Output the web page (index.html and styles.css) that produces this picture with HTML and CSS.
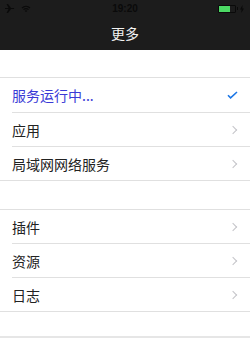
FILE: index.html
```html
<!DOCTYPE html>
<html>
<head>
<meta charset="utf-8">
<link rel="stylesheet" href="styles.css">
</head>
<body>
<div class="top">
  <div class="status">
    <div class="status-left">
      <svg width="10" height="9" viewBox="0 0 10 9"><path d="M0 4h3.5L1.5 0h1.5l3 4h3a1 1 0 0 1 0 1h-3l-3 4H1.5l2-4H0z" fill="#0a0a0a"/></svg>
      <svg width="10" height="8" viewBox="0 0 10 8"><path d="M1 3a6 6 0 0 1 8 0M2.5 4.6a4 4 0 0 1 5 0M4 6.2a2 2 0 0 1 2 0" stroke="#0a0a0a" stroke-width="1.2" fill="none"/></svg>
    </div>
    <div class="time">19:20</div>
    <div class="status-right">
      <div class="battery"><div class="battery-fill"></div></div>
      <div class="battery-tip"></div>
      <svg width="4" height="8" viewBox="0 0 4 8"><path d="M2.5 0L0 4.5h1.6L1.2 8 4 3.4H2.4z" fill="#0a0a0a"/></svg>
    </div>
  </div>
  <div class="nav">更多</div>
</div>
<div class="content">
  <div class="group group-first">
    <div class="row row-tall"><span class="label label-active">服务运行中...</span>
      <svg class="check" width="11" height="8" viewBox="0 0 11 8"><path d="M1 4.2l2.6 2.6L10 1" stroke="#1b76e6" stroke-width="1.6" fill="none"/></svg></div>
    <div class="row"><span class="label">应用</span><span class="chev"></span></div>
    <div class="row row-last"><span class="label">局域网网络服务</span><span class="chev"></span></div>
  </div>
  <div class="group group-second">
    <div class="row"><span class="label">插件</span><span class="chev"></span></div>
    <div class="row"><span class="label">资源</span><span class="chev"></span></div>
    <div class="row row-last"><span class="label">日志</span><span class="chev"></span></div>
  </div>
  <div class="group group-third"></div>
</div>
</body>
</html>
```
FILE: styles.css
```css
html, body {
  margin: 0;
  padding: 0;
  background: #ffffff;
  width: 250px;
  height: 338px;
  overflow: hidden;
  font-family: "Noto Sans CJK SC", "Noto Sans", sans-serif;
}
.top {
  background: #1c1c1c;
}
.status {
  height: 17px;
  display: flex;
  align-items: center;
  justify-content: space-between;
  padding: 0 5px;
  position: relative;
}
.status-left {
  display: flex;
  align-items: center;
  gap: 6px;
}
.time {
  position: absolute;
  left: 0;
  right: 0;
  text-align: center;
  font-family: "Liberation Sans", sans-serif;
  font-weight: bold;
  font-size: 10px;
  color: #0a0a0a;
  line-height: 17px;
}
.status-right {
  display: flex;
  align-items: center;
  gap: 1px;
  margin-right: 1px;
}
.battery {
  width: 16px;
  height: 6px;
  border: 1px solid #0a0a0a;
  border-radius: 1px;
  padding: 0;
  display: flex;
  margin-left: 0;
}
.battery-fill {
  width: 11px;
  height: 6px;
  background: #4cd964;
}
.battery-tip {
  width: 1px;
  height: 3px;
  background: #0a0a0a;
  margin-right: 1px;
}
.nav {
  height: 33px;
  line-height: 32px;
  text-align: center;
  color: #f2f2f2;
  font-size: 14px;
}
.content {
  display: flex;
  flex-direction: column;
}
.group {
  border-top: 1px solid #e0e0e0;
  border-bottom: 1px solid #e0e0e0;
  background: #ffffff;
}
.group-first {
  margin-top: 27px;
}
.group-second {
  margin-top: 28px;
}
.group-third {
  margin-top: 24px;
  border-bottom: none;
  border-top: 2px solid #e6e6e6;
}
.row {
  height: 33px;
  margin-left: 12px;
  padding-right: 12px;
  border-bottom: 1px solid #e0e0e0;
  display: flex;
  align-items: center;
  justify-content: space-between;
}
.row-tall {
  height: 34px;
}
.row-last {
  border-bottom: none;
}
.label {
  font-size: 14px;
  color: #222222;
}
.label-active {
  color: #3a3ad6;
}
.check {
  margin-right: 0;
}
.chev {
  width: 5px;
  height: 5px;
  border-top: 1.5px solid #c4c4c8;
  border-right: 1.5px solid #c4c4c8;
  transform: rotate(45deg);
  margin-right: 2px;
}
```
